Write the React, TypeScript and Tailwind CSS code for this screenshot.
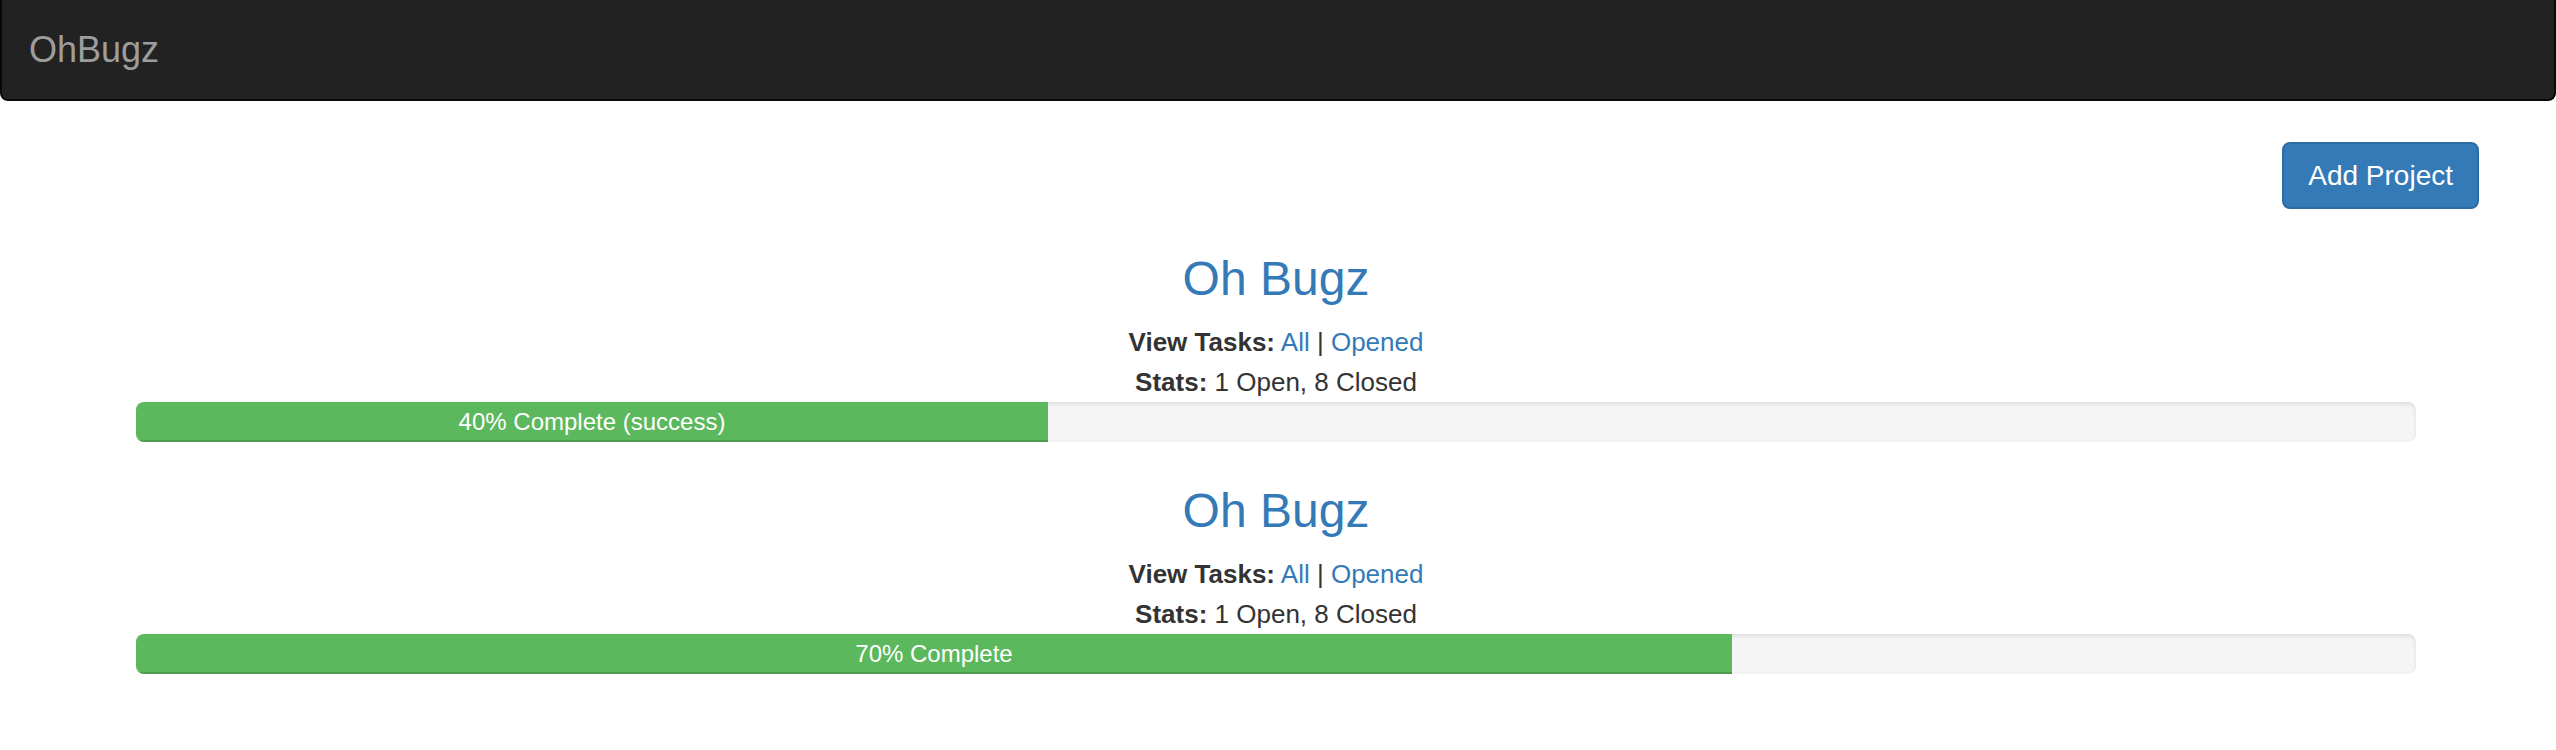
import React from 'react';

type Project = {
  name: string;
  open: number;
  closed: number;
  percent: number;
  label: string;
};

const projects: Project[] = [
  { name: 'Oh Bugz', open: 1, closed: 8, percent: 40, label: '40% Complete (success)' },
  { name: 'Oh Bugz', open: 1, closed: 8, percent: 70, label: '70% Complete' },
];

const ProjectBlock: React.FC<{ project: Project }> = ({ project }) => (
  <div className="text-center">
    <h3 className="text-[48px] leading-[53px] font-normal text-[#337ab7] mb-[17px]">
      <a href="#">{project.name}</a>
    </h3>
    <div className="text-[26px] leading-[40px] text-[#333]">
      <strong className="font-bold">View Tasks:</strong>{' '}
      <a href="#" className="text-[#337ab7]">All</a> |{' '}
      <a href="#" className="text-[#337ab7]">Opened</a>
    </div>
    <div className="text-[26px] leading-[40px] text-[#333]">
      <strong className="font-bold">Stats:</strong> {project.open} Open, {project.closed} Closed
    </div>
    <div className="h-[40px] w-full rounded-[8px] bg-[#f5f5f5] shadow-[inset_0_2px_4px_rgba(0,0,0,0.1)] overflow-hidden flex">
      <div
        className="h-full bg-[#5cb85c] shadow-[inset_0_-2px_0_rgba(0,0,0,0.15)] text-white text-[24px] leading-[40px] text-center"
        style={{ width: `${project.percent}%` }}
      >
        {project.label}
      </div>
    </div>
  </div>
);

export default function App() {
  return (
    <div className="min-h-[750px] bg-white font-['Liberation_Sans',Arial,sans-serif]">
      <nav className="h-[101px] bg-[#222] border-2 border-t-0 border-[#080808] rounded-b-[8px] flex items-center">
        <a href="#" className="pl-[27px] text-[36px] leading-[40px] text-[#9d9d9d]">
          OhBugz
        </a>
      </nav>

      <div className="flex justify-end pr-[77px] mt-[41px]">
        <button className="h-[67px] px-[24px] flex items-center rounded-[8px] border-2 border-[#2e6da4] bg-[#337ab7] text-white text-[28px] leading-[40px]">
          Add Project
        </button>
      </div>

      <div className="ml-[136px] w-[2280px] mt-[43px] flex flex-col gap-[42px]">
        {projects.map((p, i) => (
          <ProjectBlock key={i} project={p} />
        ))}
      </div>
    </div>
  );
}
